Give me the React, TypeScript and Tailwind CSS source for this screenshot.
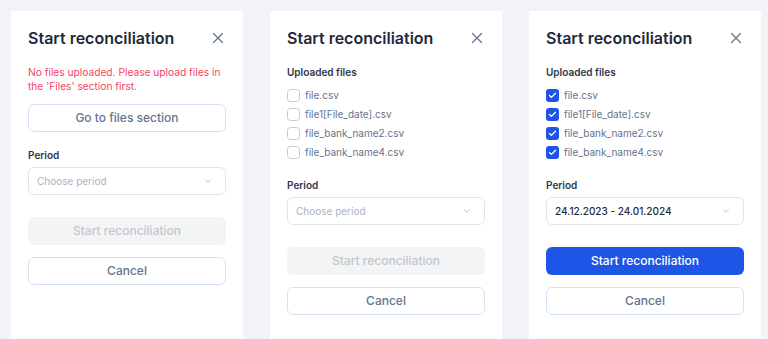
import { Check, ChevronDown, X } from "lucide-react";

type Variant = "empty" | "unchecked" | "checked";

const files = ["file.csv", "file1[File_date].csv", "file_bank_name2.csv", "file_bank_name4.csv"];

function Checkbox({ checked }: { checked: boolean }) {
  if (checked) {
    return (
      <span className="flex h-[13px] w-[13px] items-center justify-center rounded-[3px] bg-[#1f55e6]">
        <Check className="h-[9px] w-[9px] text-white" strokeWidth={3.5} />
      </span>
    );
  }
  return <span className="h-[13px] w-[13px] rounded-[3.5px] border-[1.5px] border-[#c3ccd8]" />;
}

function Card({ variant }: { variant: Variant }) {
  const ready = variant === "checked";

  return (
    <div className="w-[232px] h-[360px] shrink-0 bg-white px-[17px] pt-4">
      <div className="flex h-[22px] items-center justify-between">
        <h2 className="text-[16px] font-semibold text-[#1e293b]">Start reconciliation</h2>
        <button className="-mr-[1px] flex h-[18px] w-[18px] items-center justify-center text-[#64748b]">
          <X className="h-[18px] w-[18px]" strokeWidth={1.6} />
        </button>
      </div>

      {variant === "empty" ? (
        <>
          <p className="mt-4 text-[10.2px] leading-[14px] text-[#f4435f]">
            No files uploaded. Please upload files in the 'Files' section first.
          </p>
          <button className="mt-[11px] h-[28px] w-full rounded-md border-[1.5px] border-[#d3e2f2] text-[12px] font-medium text-[#64748b]">
            Go to files section
          </button>
          <div className="mt-[16px] text-[10px] leading-[14px] font-semibold text-[#2d3748]">Period</div>
        </>
      ) : (
        <>
          <div className="mt-4 text-[10px] leading-[14px] font-semibold text-[#2d3748]">Uploaded files</div>
          <div className="mt-[7px] flex flex-col">
            {files.map((f) => (
              <label key={f} className="flex h-[19px] items-center gap-[5px] text-[10px] text-[#64748b]">
                <Checkbox checked={ready} />
                {f}
              </label>
            ))}
          </div>
          <div className="mt-4 text-[10px] leading-[14px] font-semibold text-[#2d3748]">Period</div>
        </>
      )}

      <div className="mt-[5px] flex h-[28px] items-center justify-between rounded-md border border-[#dde6f0] pl-2 pr-3">
        <span className={`text-[10px] ${ready ? "font-medium text-[#1e293b]" : "text-[#a9b4c2]"}`}>
          {ready ? "24.12.2023 - 24.01.2024" : "Choose period"}
        </span>
        <ChevronDown className="h-[10px] w-[10px] text-[#94a3b8]" strokeWidth={1.6} />
      </div>

      <button
        className={`mt-[22px] h-[28px] w-full rounded-md text-[12px] font-medium ${
          ready ? "bg-[#1f55e6] text-white" : "bg-[#f3f4f5] text-[#c3c7cc]"
        }`}
      >
        Start reconciliation
      </button>
      <button className="mt-3 h-[28px] w-full rounded-md border-[1.5px] border-[#d3e2f2] text-[12px] font-medium text-[#64748b]">
        Cancel
      </button>
    </div>
  );
}

export default function App() {
  return (
    <main className="h-[339px] overflow-hidden bg-[#f1f3f6] font-['Inter',sans-serif]">
      <div className="flex gap-[27px] pl-[11px] pt-[11px]">
        <Card variant="empty" />
        <Card variant="unchecked" />
        <Card variant="checked" />
      </div>
    </main>
  );
}
